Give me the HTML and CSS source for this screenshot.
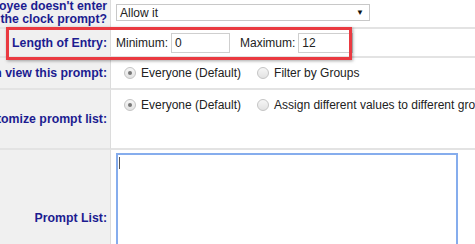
FILE: index.html
```html
<!DOCTYPE html>
<html><head>
    <meta charset="UTF-8">
    <meta name="viewport" content="width=device-width, initial-scale=1.0">
    <title>Clock Prompt - Edit</title>
    <link rel="stylesheet" href="styles.css">
</head>
<body>
    <div class="page">
        <table class="prompt-form">
            <tr class="row-missing">
                <th>
                    <span class="line">What happens if the employee doesn't enter</span>
                    <span class="line">the clock prompt?</span>
                </th>
                <td>
                    <div class="select">
                        <span>Allow it</span>
                        <span class="select-arrow">▼</span>
                    </div>
                </td>
            </tr>
            <tr class="row-length">
                <th>Length of Entry:</th>
                <td>
                    <div class="field-group">
                        <label>Minimum:</label>
                        <div class="text-input min-input">0</div>
                        <label class="max-label">Maximum:</label>
                        <div class="text-input max-input">12</div>
                    </div>
                </td>
            </tr>
            <tr class="row-view">
                <th>Who can view this prompt:</th>
                <td>
                    <div class="radio-group">
                        <span class="radio checked"></span><span class="radio-text">Everyone (Default)</span>
                        <span class="radio"></span><span class="radio-text">Filter by Groups</span>
                    </div>
                </td>
            </tr>
            <tr class="row-customize">
                <th>Customize prompt list:</th>
                <td>
                    <div class="radio-group">
                        <span class="radio checked"></span><span class="radio-text">Everyone (Default)</span>
                        <span class="radio"></span><span class="radio-text">Assign different values to different groups</span>
                    </div>
                </td>
            </tr>
            <tr class="row-list">
                <th>Prompt List:</th>
                <td>
                    <div class="textarea"><span class="caret"></span></div>
                </td>
            </tr>
        </table>
        <!-- annotation drawn over the screenshot -->
        <div class="highlight"></div>
    </div>
</body>
</html>
```

FILE: styles.css
```css
body {
    font-family: 'Liberation Sans', Arial, sans-serif;
    font-size: 12px;
    margin: 0;
    padding: 0;
    background-color: #ffffff;
    color: #333333;
}
.page {
    position: relative;
    width: 475px;
    height: 244px;
    overflow: hidden;
}
.prompt-form {
    border-collapse: separate;
    border-spacing: 0;
    table-layout: fixed;
    width: 760px;
    margin-left: -150px;
}
.prompt-form th,
.prompt-form td {
    box-sizing: border-box;
    border-bottom: 2px solid #e3e3e3;
    padding: 0;
}
.prompt-form th {
    width: 261px;
    background-color: #f0f0f0;
    border-right: 1px solid #dcdcdc;
    color: #1c1c90;
    font-weight: bold;
    font-size: 12.3px;
    text-align: right;
    white-space: nowrap;
    padding-right: 3px;
    vertical-align: middle;
}
.prompt-form td {
    padding-left: 5px;
    vertical-align: middle;
    white-space: nowrap;
}
.row-missing th,
.row-missing td {
    height: 29px;
}
.row-missing th {
    line-height: 13px;
    padding-bottom: 1px;
}
.line {
    display: block;
}
.row-length th,
.row-length td {
    height: 29px;
}
.row-view th,
.row-view td {
    height: 32px;
}
.row-customize th,
.row-customize td {
    height: 60px;
}
.row-customize td {
    vertical-align: top;
    padding-top: 8px;
}
.row-list td {
    padding-top: 3px;
    padding-bottom: 3px;
}
.select {
    box-sizing: border-box;
    width: 254px;
    height: 17px;
    border: 1px solid #c8c8c8;
    background-color: #ffffff;
    display: flex;
    align-items: center;
    justify-content: space-between;
    padding: 0 5px 0 3px;
    color: #222222;
    margin-top: -2px;
}
.select-arrow {
    font-size: 8px;
    color: #111111;
}
.field-group {
    display: flex;
    align-items: center;
    color: #222222;
}
.text-input {
    box-sizing: border-box;
    height: 20px;
    border: 1px solid #cfcfcf;
    background-color: #ffffff;
    padding: 0 3px;
    line-height: 18px;
    color: #222222;
}
.min-input {
    width: 59px;
    margin-left: 3px;
}
.max-label {
    margin-left: 10px;
}
.max-input {
    width: 55px;
    margin-left: 3px;
}
.radio-group {
    display: flex;
    align-items: center;
    padding-left: 8px;
    color: #222222;
}
.radio {
    box-sizing: border-box;
    width: 12px;
    height: 12px;
    border-radius: 50%;
    border: 1px solid #c4c4c4;
    background: linear-gradient(#f6f6f6, #e2e2e2);
    position: relative;
    margin-right: 5px;
}
.radio.checked::after {
    content: '';
    position: absolute;
    left: 3px;
    top: 3px;
    width: 4px;
    height: 4px;
    border-radius: 50%;
    background-color: #777777;
}
.radio-text {
    margin-right: 16px;
}
.textarea {
    box-sizing: border-box;
    width: 342px;
    height: 130px;
    border: 2px solid #86aded;
    background-color: #ffffff;
    padding: 2px 1px;
}
.caret {
    display: block;
    width: 1px;
    height: 12px;
    background-color: #555555;
}
.highlight {
    position: absolute;
    left: 6px;
    top: 27px;
    width: 346px;
    height: 33px;
    box-sizing: border-box;
    border: 3px solid #ea3a41;
    box-shadow: 1px 1px 3px rgba(0,0,0,0.35);
}
```
